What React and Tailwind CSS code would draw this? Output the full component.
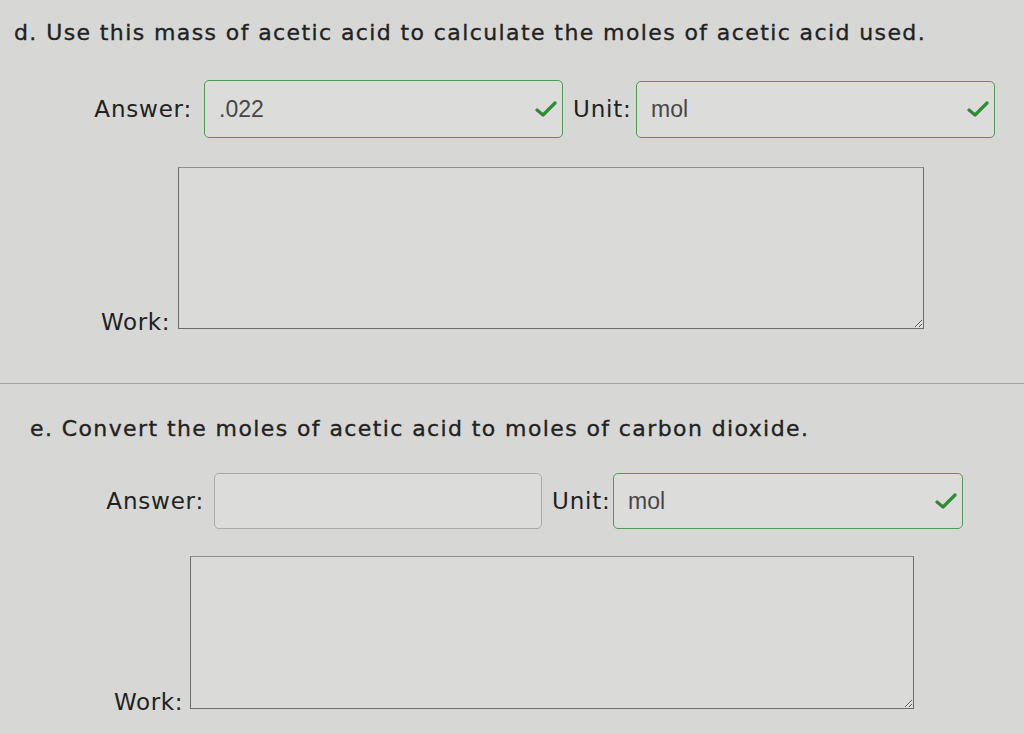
import React from 'react'

const labelFont = { fontFamily: '"DejaVu Sans", Verdana, sans-serif' }

function Check() {
  return (
    <svg width="22" height="16" viewBox="0 0 22 16" className="absolute right-[6px] top-1/2 -translate-y-1/2">
      <polyline points="2,9 8,14 20,2" fill="none" stroke="#2f8a35" strokeWidth="3.2" strokeLinecap="round" strokeLinejoin="round" />
    </svg>
  )
}

function Field({ value, width, height, ok }) {
  return (
    <div className="relative shrink-0" style={{ width, height }}>
      <input
        readOnly
        value={value}
        className={
          'h-full w-full rounded-[5px] border bg-[#dcdddb] pl-[14px] text-[23px] text-[#474747] outline-none ' +
          (ok ? 'border-[#4f9a55]' : 'border-[#a9aaa8]')
        }
        style={{ fontFamily: '"Liberation Sans", Arial, sans-serif' }}
      />
      {ok && <Check />}
    </div>
  )
}

function App() {
  return (
    <div className="h-[734px] w-[1024px] overflow-hidden bg-[#d7d8d6] text-[#222222]" style={labelFont}>
      {/* part d */}
      <div className="pt-[19px]">
        <h2 className="pl-[14px] text-[22px] leading-[28px] tracking-[1.4px] [-webkit-text-stroke:0.35px_#222222]">
          d. Use this mass of acetic acid to calculate the moles of acetic acid used.
        </h2>

        <div className="mt-[33px] flex items-center pl-[80px]">
          <span className="w-[112px] text-right text-[23px] tracking-[0.8px]">Answer:</span>
          <div className="ml-[12px]">
            <Field value=".022" width={359} height={58} ok />
          </div>
          <span className="ml-[10px] w-[62px] text-[23px] tracking-[0.8px]">Unit:</span>
          <div className="ml-[1px]">
            <Field value="mol" width={359} height={57} ok />
          </div>
        </div>

        <div className="mt-[29px] flex items-end pl-[90px]">
          <span className="mb-[-10px] w-[80px] text-right text-[23px] tracking-[0.6px]">Work:</span>
          <textarea
            readOnly
            className="ml-[8px] h-[162px] w-[746px] border border-[#6b6c6a] border-t-[#8d8e8c] bg-[#dadbd9] outline-none"
          />
        </div>
      </div>

      <div className="mt-[54px] border-t border-[#a3a4a2]" />

      {/* part e */}
      <div>
        <h2 className="mt-[31px] pl-[30px] text-[22px] leading-[28px] tracking-[1.4px] [-webkit-text-stroke:0.35px_#222222]">
          e. Convert the moles of acetic acid to moles of carbon dioxide.
        </h2>

        <div className="mt-[30px] flex items-center pl-[92px]">
          <span className="w-[112px] text-right text-[23px] tracking-[0.8px]">Answer:</span>
          <div className="ml-[10px]">
            <Field value="" width={328} height={56} ok={false} />
          </div>
          <span className="ml-[10px] w-[60px] text-[23px] tracking-[0.8px]">Unit:</span>
          <div className="ml-[1px]">
            <Field value="mol" width={350} height={56} ok />
          </div>
        </div>

        <div className="mt-[27px] flex items-end pl-[102px]">
          <span className="mb-[-10px] w-[81px] text-right text-[23px] tracking-[0.6px]">Work:</span>
          <textarea
            readOnly
            className="ml-[7px] h-[153px] w-[724px] border border-[#6b6c6a] border-t-[#8d8e8c] bg-[#dadbd9] outline-none"
          />
        </div>
      </div>
    </div>
  )
}

export default App
